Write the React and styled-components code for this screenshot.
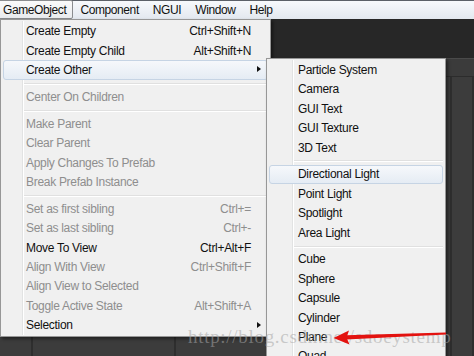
import React from "react";
import styled, { createGlobalStyle } from "styled-components";

const GlobalStyle = createGlobalStyle`
    html, body {
        margin: 0;
        padding: 0;
        background: #3a3a3a;
    }
`;

const Screen = styled.div`
    position: relative;
    width: 474px;
    height: 356px;
    overflow: hidden;
    display: flex;
    flex-direction: column;
    background: #3a3a3a;
    font-family: "Liberation Sans", Arial, sans-serif;
    font-size: 12px;
    letter-spacing: -0.3px;
`;

const MenuBar = styled.div`
    height: 19px;
    flex: none;
    display: flex;
    align-items: stretch;
    margin-left: -4px;
    background: linear-gradient(#f7f9fc, #e3e8ef);
    border-top: 1px solid #5b6068;
    box-sizing: border-box;
`;

const MenuBarItem = styled.div`
    display: flex;
    align-items: center;
    padding: 0 6px;
    margin-top: -1px;
    color: #111;
    letter-spacing: -0.4px;
    border: 1px solid ${(p) => (p.$open ? "#8a8c8f" : "transparent")};
    border-radius: 2px;
    background: ${(p) => (p.$open ? "linear-gradient(#fafafa, #e9ebee)" : "transparent")};
`;

const Body = styled.div`
    position: relative;
    flex: 1;
    display: flex;
    flex-direction: column;
`;

const DarkStrip = styled.div`
    height: 39px;
    background: #272727;
`;

const ToolRow = styled.div`
    height: 19px;
    background: #3b3b3b;
    border-top: 1px solid #4a4a4a;
    border-bottom: 1px solid #2c2c2c;
    box-sizing: border-box;
`;

const Panels = styled.div`
    flex: 1;
    display: flex;
`;

const Panel = styled.div`
    width: ${(p) => (p.$w ? `${p.$w}px` : "auto")};
    flex: ${(p) => (p.$w ? "none" : 1)};
    background: #3c3c3c;
    border-right: 2px solid #2e2e2e;
`;

const Menu = styled.div`
    position: absolute;
    top: ${(p) => p.$top}px;
    left: ${(p) => p.$left};
    width: ${(p) => p.$width}px;
    padding: 1.5px 0;
    box-sizing: border-box;
    background: #f0f0f0;
    border: 1px solid #979797;
    box-shadow: 2px 2px 3px rgba(0, 0, 0, 0.45);
    z-index: ${(p) => p.$z || 1};

    &::before {
        content: "";
        position: absolute;
        top: 1px;
        bottom: 1px;
        left: ${(p) => p.$gutter}px;
        width: 1px;
        background: #e2e3e3;
        box-shadow: 1px 0 0 #ffffff;
    }
`;

const Row = styled.div`
    position: relative;
    height: 19.4px;
    margin: 0 2px;
    padding: 0 16px 0 ${(p) => p.$pad}px;
    box-sizing: border-box;
    display: flex;
    align-items: center;
    justify-content: space-between;
    white-space: nowrap;
    color: ${(p) => (p.$disabled ? "#8e8e8e" : "#111111")};
    border: 1px solid ${(p) => (p.$active ? "#c6d4e4" : "transparent")};
    border-radius: 3px;
    background: ${(p) => (p.$active ? "linear-gradient(#f6f8fb, #e5ecf4)" : "transparent")};
`;

const Shortcut = styled.span`
    color: inherit;
`;

const Arrow = styled.span`
    position: absolute;
    right: 6px;
    top: 50%;
    margin-top: -3.5px;
    width: 0;
    height: 0;
    border-top: 3.5px solid transparent;
    border-bottom: 3.5px solid transparent;
    border-left: 4px solid #111;
`;

const Separator = styled.div`
    height: 7.5px;
    display: flex;
    align-items: center;
    padding-left: ${(p) => p.$pad}px;
    padding-right: 2px;

    &::after {
        content: "";
        flex: 1;
        height: 1px;
        background: #e0e0e0;
        box-shadow: 0 1px 0 #ffffff;
    }
`;

const Watermark = styled.div`
    position: absolute;
    left: 188px;
    top: 326px;
    font-family: "Liberation Serif", "Times New Roman", serif;
    font-size: 19px;
    letter-spacing: 0.7px;
    color: rgba(165, 165, 165, 0.55);
    white-space: nowrap;
    pointer-events: none;
    z-index: 5;
`;

const Overlay = styled.svg`
    position: absolute;
    left: 0;
    top: 0;
    z-index: 6;
    pointer-events: none;
`;

const SEP = { sep: true };

const mainItems = [
    { label: "Create Empty", sc: "Ctrl+Shift+N" },
    { label: "Create Empty Child", sc: "Alt+Shift+N" },
    { label: "Create Other", sub: true, active: true },
    SEP,
    { label: "Center On Children", off: true },
    SEP,
    { label: "Make Parent", off: true },
    { label: "Clear Parent", off: true },
    { label: "Apply Changes To Prefab", off: true },
    { label: "Break Prefab Instance", off: true },
    SEP,
    { label: "Set as first sibling", sc: "Ctrl+=", off: true },
    { label: "Set as last sibling", sc: "Ctrl+-", off: true },
    { label: "Move To View", sc: "Ctrl+Alt+F" },
    { label: "Align With View", sc: "Ctrl+Shift+F", off: true },
    { label: "Align View to Selected", off: true },
    { label: "Toggle Active State", sc: "Alt+Shift+A", off: true },
    { label: "Selection", sub: true },
];

const otherItems = [
    { label: "Particle System" },
    { label: "Camera" },
    { label: "GUI Text" },
    { label: "GUI Texture" },
    { label: "3D Text" },
    SEP,
    { label: "Directional Light", active: true },
    { label: "Point Light" },
    { label: "Spotlight" },
    { label: "Area Light" },
    SEP,
    { label: "Cube" },
    { label: "Sphere" },
    { label: "Capsule" },
    { label: "Cylinder" },
    { label: "Plane" },
    { label: "Quad" },
];

const MenuList = ({ items, pad, sepPad, children }) =>
    items.map((item, i) =>
        item.sep ? (
            <Separator key={i} $pad={sepPad} />
        ) : (
            <Row key={i} $pad={pad} $disabled={item.off} $active={item.active}>
                <span>{item.label}</span>
                {item.sc && <Shortcut>{item.sc}</Shortcut>}
                {item.sub && <Arrow />}
                {item.active && children}
            </Row>
        )
    );

const App = () => {
    return (
        <>
            <GlobalStyle />
            <Screen>
                <MenuBar>
                    <MenuBarItem $open>GameObject</MenuBarItem>
                    <MenuBarItem>Component</MenuBarItem>
                    <MenuBarItem>NGUI</MenuBarItem>
                    <MenuBarItem>Window</MenuBarItem>
                    <MenuBarItem>Help</MenuBarItem>
                </MenuBar>
                <Body>
                    <DarkStrip />
                    <ToolRow />
                    <Panels>
                        <Panel $w={31} />
                        <Panel $w={141} />
                        <Panel $w={274} />
                        <Panel />
                    </Panels>

                    <Menu $top={0} $left="0px" $width={271} $gutter={21}>
                        <MenuList items={mainItems} pad={22} sepPad={23}>
                            <Menu $top={-3.5} $left="262px" $width={180} $gutter={25} $z={2}>
                                <MenuList items={otherItems} pad={28} sepPad={27} />
                            </Menu>
                        </MenuList>
                    </Menu>
                </Body>

                <Watermark>http://blog.csdn.net/sdoeystemp</Watermark>
                <Overlay width="474" height="356" viewBox="0 0 474 356">
                    <path d="M346 335.2 L446 332.6 L446 334.6 L346 339.6 Z" fill="#e3120f" />
                    <path d="M333.5 338 L349 330.5 L346.5 337.4 L349.5 344.5 Z" fill="#e3120f" />
                </Overlay>
            </Screen>
        </>
    );
};

export default App;
